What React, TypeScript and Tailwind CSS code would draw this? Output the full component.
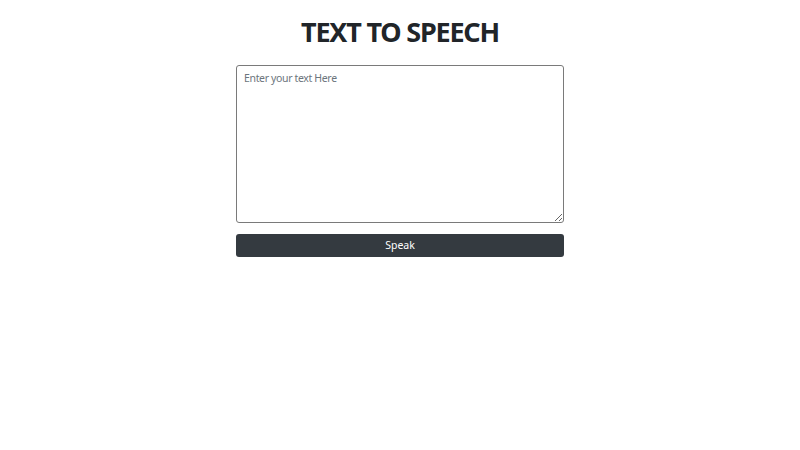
import React from "react";

export default function App() {
  return (
    <div className="min-h-[450px] w-full bg-white" style={{ fontFamily: '"Noto Sans", "Open Sans", sans-serif' }}>
      <div className="mx-auto flex w-[328px] flex-col items-center pt-[15px]">
        <h1 className="text-[27px] font-bold leading-[34px] text-[#212529] tracking-[-1.2px]">TEXT TO SPEECH</h1>
        <textarea
          className="mt-[16px] block h-[158px] w-[328px] resize-y rounded-[3px] border border-[#7a7a7a] px-[7px] py-[4px] text-[10.5px] leading-[16px] tracking-[-0.35px] text-[#212529] placeholder:text-[#6c757d] outline-none"
          placeholder="Enter your text Here"
        />
        <button className="mt-[11px] h-[23px] w-[328px] rounded-[3px] bg-[#343a40] text-[10.5px] leading-[23px] text-white">
          Speak
        </button>
      </div>
    </div>
  );
}
